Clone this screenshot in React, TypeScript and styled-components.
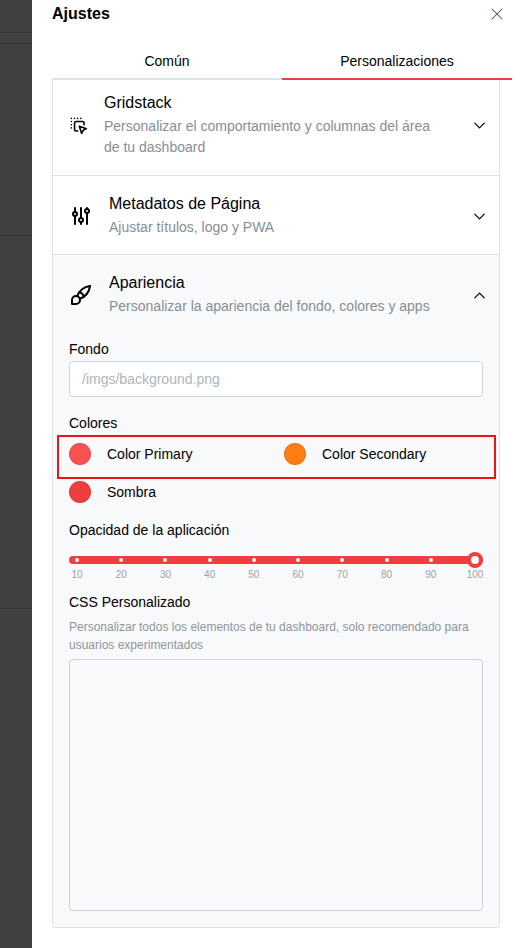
import React from "react";
import styled, { createGlobalStyle } from "styled-components";
import { TbDragDrop, TbAdjustments, TbBrush, TbChevronDown, TbChevronUp, TbX } from "react-icons/tb";

const Global = createGlobalStyle`
  html, body { margin: 0; padding: 0; height: 100%; overflow: hidden; background: #fff; }
  body { font-family: "Liberation Sans", Arial, sans-serif; color: #000; }
  #root { height: 100%; }
  * { box-sizing: border-box; }
`;

const Page = styled.div`
  display: flex;
  height: 948px;
  width: 526px;
  overflow: hidden;
`;

const Backdrop = styled.div`
  width: 32px;
  flex: none;
  background: #404040;
  display: flex;
  flex-direction: column;
`;

const BackdropLine = styled.div<{ $gap: number }>`
  height: 1px;
  flex: none;
  margin-top: ${(p) => p.$gap}px;
  background: #383838;
`;

const Drawer = styled.div`
  flex: 1;
  padding: 0 14px 0 20px;
  background: #fff;
  display: flex;
  flex-direction: column;
  min-width: 0;
`;

const Header = styled.header`
  height: 42px;
  display: flex;
  justify-content: space-between;
  align-items: flex-start;
  padding-top: 5px;
`;

const Title = styled.h2`
  margin: 0;
  font-size: 16px;
  line-height: 18px;
  font-weight: 700;
`;

const Close = styled.button`
  border: 0;
  background: none;
  padding: 0;
  width: 20px;
  height: 20px;
  margin: -1px 5px 0 0;
  color: #495057;
  display: flex;
  font-size: 20px;
  svg { stroke-width: 1.25; }
`;

const Tabs = styled.div`
  display: flex;
  height: 38px;
  border-bottom: 2px solid #dee2e6;
`;

const Tab = styled.div<{ $active?: boolean }>`
  flex: 1;
  display: flex;
  align-items: center;
  justify-content: center;
  font-size: 14px;
  height: 38px;
  padding-top: 1px;
  border-bottom: 2px solid ${(p) => (p.$active ? "#f03e3e" : "transparent")};
`;

const Accordion = styled.div`
  width: 448px;
  height: 848px;
  border: 1px solid #dee2e6;
  border-top: 0;
  border-radius: 0 0 4px 4px;
  display: flex;
  flex-direction: column;
`;

const Section = styled.section<{ $open?: boolean; $height?: number }>`
  background: ${(p) => (p.$open ? "#f8f9fa" : "#fff")};
  flex: ${(p) => (p.$open ? 1 : "none")};
  height: ${(p) => (p.$height ? `${p.$height}px` : "auto")};
  border-bottom: ${(p) => (p.$open ? "0" : "1px solid #dee2e6")};
  border-radius: ${(p) => (p.$open ? "0 0 4px 4px" : "0")};
`;

const SectionHead = styled.div<{ $height: number; $iconWidth: number; $shift: number }>`
  height: ${(p) => p.$height}px;
  padding: ${(p) => Math.max(p.$shift, 0)}px 12px ${(p) => Math.max(-p.$shift, 0)}px 16px;
  display: grid;
  grid-template-columns: ${(p) => p.$iconWidth}px 1fr 16px;
  column-gap: 16px;
  align-items: center;
`;

const HeadIcon = styled.div<{ $size: number }>`
  display: flex;
  align-items: center;
  justify-content: center;
  font-size: ${(p) => p.$size}px;
`;

const HeadText = styled.div<{ $max?: number }>`
  min-width: 0;
  max-width: ${(p) => (p.$max ? `${p.$max}px` : "none")};
`;

const HeadTitle = styled.div`
  font-size: 16px;
  line-height: 20px;
  margin-bottom: 3px;
`;

const HeadDesc = styled.div`
  font-size: 14px;
  line-height: 21px;
  color: #868e96;
`;

const Chevron = styled.div`
  display: flex;
  justify-content: center;
  width: 16px;
  font-size: 19px;
  svg { stroke-width: 1.5; flex: none; }
`;

const Panel = styled.div`
  padding: 0 16px;
  display: flex;
  flex-direction: column;
`;

const Label = styled.div<{ $top: number }>`
  font-size: 14px;
  line-height: 18px;
  margin-top: ${(p) => p.$top}px;
`;

const Input = styled.div`
  margin-top: 3px;
  height: 36px;
  background: #fff;
  border: 1px solid #ced4da;
  border-radius: 4px;
  font-size: 14px;
  line-height: 34px;
  padding-left: 12px;
  color: #adb5bd;
`;

const ColorArea = styled.div`
  position: relative;
  margin-top: 7px;
  display: grid;
  grid-template-columns: 215px 1fr;
  grid-auto-rows: 38px;
`;

const Highlight = styled.div`
  position: absolute;
  left: -12px;
  right: -13px;
  top: -4px;
  height: 44px;
  border: 2px solid #f21414;
  pointer-events: none;
`;

const ColorItem = styled.div`
  display: flex;
  align-items: center;
  gap: 16px;
  height: 30px;
  font-size: 14px;
`;

const Swatch = styled.div<{ $color: string }>`
  width: 22px;
  height: 22px;
  border-radius: 50%;
  background: ${(p) => p.$color};
  box-shadow: inset 0 0 0 1px rgba(0, 0, 0, 0.08);
`;

const Track = styled.div`
  position: relative;
  margin-top: 17px;
  height: 8px;
  background: #f03e3e;
  border-radius: 4px;
  padding: 0 8px 0 8px;
  display: flex;
  justify-content: space-between;
  align-items: center;
`;

const Mark = styled.div`
  position: relative;
  width: 0;
  display: flex;
  justify-content: center;
`;

const Dot = styled.div`
  flex: none;
  width: 4px;
  height: 4px;
  border-radius: 50%;
  background: #fff;
`;

const MarkLabel = styled.div`
  position: absolute;
  top: 11px;
  font-size: 10px;
  line-height: 12px;
  color: #9aa1a8;
`;

const Thumb = styled.div`
  position: absolute;
  right: 0;
  top: -4px;
  width: 16px;
  height: 16px;
  border-radius: 50%;
  background: #fff;
  border: 4px solid #f03e3e;
`;

const Hint = styled.div`
  margin-top: 7px;
  font-size: 12px;
  line-height: 18px;
  color: #8f959c;
`;

const TextArea = styled.div`
  margin-top: 5px;
  height: 252px;
  border: 1px solid #ced4da;
  border-radius: 4px;
  background: #f8f9fa;
`;

const marks = [10, 20, 30, 40, 50, 60, 70, 80, 90, 100];

export default function App() {
  return (
    <Page>
      <Global />
      <Backdrop>
        <BackdropLine $gap={32} />
        <BackdropLine $gap={10} />
        <BackdropLine $gap={191} />
        <BackdropLine $gap={372} />
      </Backdrop>
      <Drawer>
        <Header>
          <Title>Ajustes</Title>
          <Close aria-label="Cerrar"><TbX /></Close>
        </Header>
        <Tabs>
          <Tab>Común</Tab>
          <Tab $active>Personalizaciones</Tab>
        </Tabs>
        <Accordion>
          <Section $height={96}>
            <SectionHead $height={95} $iconWidth={19} $shift={-4}>
              <HeadIcon $size={19}><TbDragDrop /></HeadIcon>
              <HeadText $max={335}>
                <HeadTitle>Gridstack</HeadTitle>
                <HeadDesc>Personalizar el comportamiento y columnas del área de tu dashboard</HeadDesc>
              </HeadText>
              <Chevron><TbChevronDown /></Chevron>
            </SectionHead>
          </Section>
          <Section $height={79}>
            <SectionHead $height={78} $iconWidth={24} $shift={2}>
              <HeadIcon $size={24}><TbAdjustments /></HeadIcon>
              <HeadText>
                <HeadTitle>Metadatos de Página</HeadTitle>
                <HeadDesc>Ajustar títulos, logo y PWA</HeadDesc>
              </HeadText>
              <Chevron><TbChevronDown /></Chevron>
            </SectionHead>
          </Section>
          <Section $open>
            <SectionHead $height={78} $iconWidth={24} $shift={2}>
              <HeadIcon $size={24}><TbBrush /></HeadIcon>
              <HeadText>
                <HeadTitle>Apariencia</HeadTitle>
                <HeadDesc>Personalizar la apariencia del fondo, colores y apps</HeadDesc>
              </HeadText>
              <Chevron><TbChevronUp /></Chevron>
            </SectionHead>
            <Panel>
              <Label $top={7}>Fondo</Label>
              <Input>/imgs/background.png</Input>
              <Label $top={17}>Colores</Label>
              <ColorArea>
                <ColorItem><Swatch $color="#fa5252" />Color Primary</ColorItem>
                <ColorItem><Swatch $color="#fd7e14" />Color Secondary</ColorItem>
                <ColorItem><Swatch $color="#f03e3e" />Sombra</ColorItem>
                <Highlight />
              </ColorArea>
              <Label $top={6}>Opacidad de la aplicación</Label>
              <Track>
                {marks.map((m) => (
                  <Mark key={m}>
                    <Dot />
                    <MarkLabel>{m}</MarkLabel>
                  </Mark>
                ))}
                <Thumb />
              </Track>
              <Label $top={29}>CSS Personalizado</Label>
              <Hint>Personalizar todos los elementos de tu dashboard, solo recomendado para usuarios experimentados</Hint>
              <TextArea />
            </Panel>
          </Section>
        </Accordion>
      </Drawer>
    </Page>
  );
}
